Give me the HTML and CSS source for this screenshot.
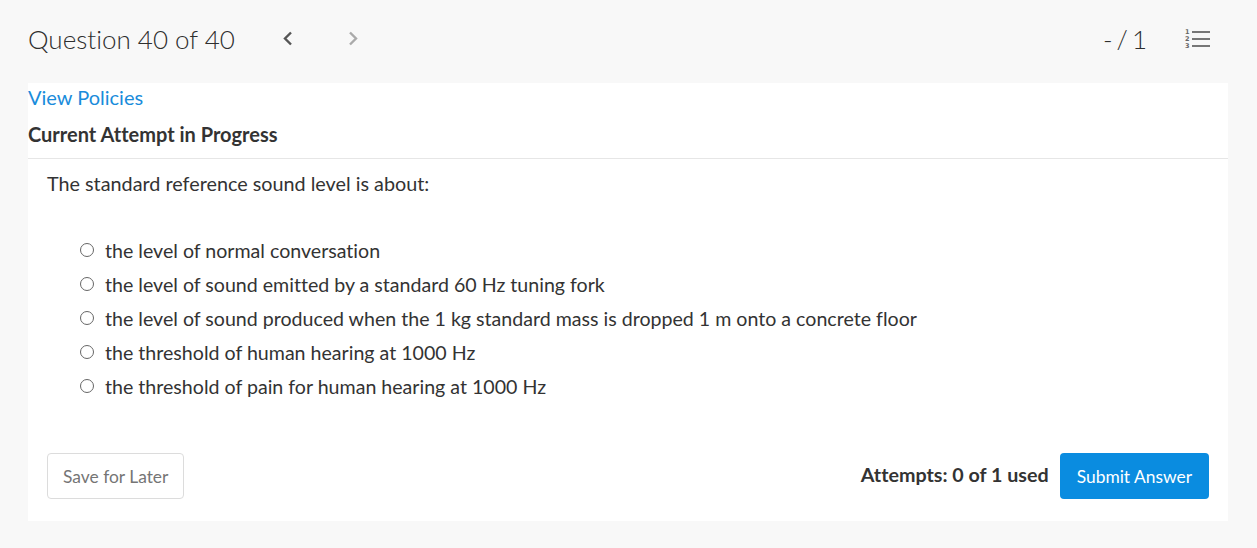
FILE: index.html
```html
<!DOCTYPE html>
<html>
<head>
<meta charset="utf-8">
<link rel="stylesheet" href="styles.css">
</head>
<body>
<header class="topbar">
  <div class="title-group">
    <h1 class="title">Question 40 of 40</h1>
    <button class="nav prev" aria-label="Previous">
      <svg width="12" height="15" viewBox="0 0 12 15"><path d="M9 1.5 L3 7.5 L9 13.5" fill="none" stroke="#555" stroke-width="2.4"/></svg>
    </button>
    <button class="nav next" aria-label="Next">
      <svg width="12" height="15" viewBox="0 0 12 15"><path d="M3 1.5 L9 7.5 L3 13.5" fill="none" stroke="#aaa" stroke-width="2.4"/></svg>
    </button>
  </div>
  <div class="score-group">
    <span class="score">- / 1</span>
    <svg class="list-icon" width="25" height="21" viewBox="0 0 25 21">
      <text x="0" y="6" class="num">1</text>
      <text x="0" y="13" class="num">2</text>
      <text x="0" y="20" class="num">3</text>
      <rect x="7" y="3" width="18" height="2" fill="#777"/>
      <rect x="7" y="10" width="18" height="2" fill="#777"/>
      <rect x="7" y="17" width="18" height="2" fill="#777"/>
    </svg>
  </div>
</header>
<main class="card">
  <a class="policies" href="#">View Policies</a>
  <h2 class="attempt">Current Attempt in Progress</h2>
  <div class="question">
    <p class="prompt">The standard reference sound level is about:</p>
    <ul class="options">
      <li><span class="radio"></span>the level of normal conversation</li>
      <li><span class="radio"></span>the level of sound emitted by a standard 60 Hz tuning fork</li>
      <li><span class="radio"></span>the level of sound produced when the 1 kg standard mass is dropped 1 m onto a concrete floor</li>
      <li><span class="radio"></span>the threshold of human hearing at 1000 Hz</li>
      <li><span class="radio"></span>the threshold of pain for human hearing at 1000 Hz</li>
    </ul>
    <div class="actions">
      <button class="btn-save">Save for Later</button>
      <div class="submit-group">
        <span class="attempts">Attempts: 0 of 1 used</span>
        <button class="btn-submit">Submit Answer</button>
      </div>
    </div>
  </div>
</main>
</body>
</html>
```

FILE: styles.css
```css
* { box-sizing: border-box; }
html, body { margin: 0; padding: 0; }
body {
  background: #f8f8f8;
  font-family: Lato, "Open Sans", sans-serif;
  font-variant-ligatures: none;
  color: #333;
  width: 1257px;
  height: 548px;
  overflow: hidden;
}
.topbar {
  height: 83px;
  display: flex;
  align-items: center;
  justify-content: space-between;
  padding: 0 47px 0 28px;
}
.title-group { display: flex; align-items: center; }
.title {
  margin: 0;
  font-size: 26px;
  font-weight: 300;
  color: #2e2e2e;
  padding-bottom: 6px;
}
.nav {
  background: none;
  border: 0;
  padding: 0;
  display: flex;
  align-items: center;
  margin-bottom: 6px;
}
.prev { margin-left: 47px; }
.next { margin-left: 53px; }
.score-group { display: flex; align-items: center; }
.score { font-size: 26px; font-weight: 300; color: #2e2e2e; padding-bottom: 6px; word-spacing: -3px; }
.list-icon { margin-left: 38px; margin-bottom: 6px; overflow: visible; }
.list-icon .num { font-family: "DejaVu Sans", sans-serif; font-size: 6.5px; font-weight: 700; fill: #666; }
.card {
  background: #fff;
  margin: 0 29px 0 28px;
  height: 438px;
  display: flex;
  flex-direction: column;
}
.policies {
  color: #1a8cdb;
  text-decoration: none;
  font-size: 20px;
  line-height: 26px;
  margin-top: 1px;
  align-self: flex-start;
}
.attempt {
  margin: 12px 0 0;
  font-size: 20px;
  font-weight: 700;
  line-height: 24px;
  padding-bottom: 12px;
  border-bottom: 1px solid #e6e6e6;
  color: #333;
}
.question { padding: 12px 19px 0 19px; flex: 1; display: flex; flex-direction: column; }
.prompt { margin: 0; font-size: 19.8px; line-height: 24px; }
.options { list-style: none; margin: 39px 0 0; padding: 0 0 0 33px; }
.options li {
  display: flex;
  align-items: center;
  font-size: 19.6px;
  line-height: 24px;
  height: 34px;
}
.radio {
  width: 14px;
  height: 14px;
  border: 1.5px solid #666;
  border-radius: 50%;
  margin-right: 11px;
  margin-top: -2px;
  flex: none;
}
.actions {
  margin-top: 49px;
  display: flex;
  justify-content: space-between;
  align-items: center;
}
.btn-save {
  font-family: Lato, sans-serif;
  font-variant-ligatures: none;
  white-space: nowrap;
  height: 46px;
  padding: 0 15px 0 15px;
  border: 1px solid #dcdcdc;
  border-radius: 4px;
  background: #fff;
  color: #757575;
  font-size: 17.4px;
}
.submit-group { display: flex; align-items: center; }
.attempts { font-size: 19.7px; font-weight: 700; margin-right: 11px; padding-bottom: 3px; }
.btn-submit {
  font-family: Lato, sans-serif;
  font-variant-ligatures: none;
  white-space: nowrap;
  height: 46px;
  padding: 0 17px;
  border: 0;
  border-radius: 4px;
  background: #0a8ce0;
  color: #fff;
  font-size: 17.4px;
}
```
